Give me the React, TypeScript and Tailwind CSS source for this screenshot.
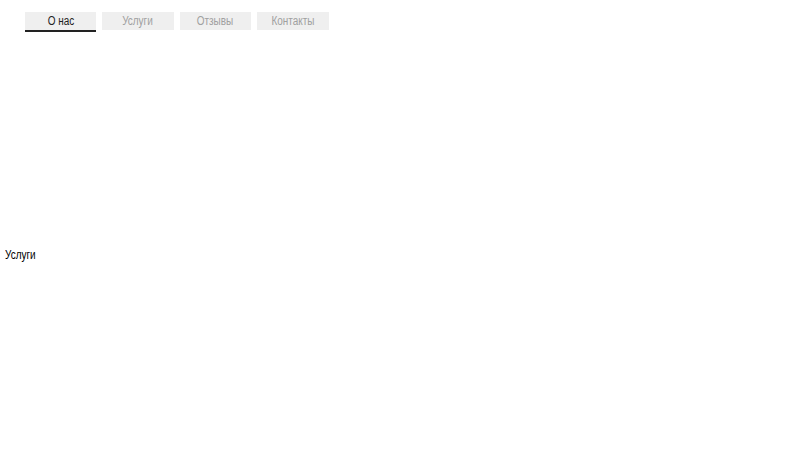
import { useState } from "react";

const TABS = ["О нас", "Услуги", "Отзывы", "Контакты"];

export default function App() {
  const [active, setActive] = useState(0);

  return (
    <div className="min-h-[450px] bg-white font-['Liberation_Sans',Arial,sans-serif] text-[12px]">
      <ul className="flex gap-[6px] pl-[25px] pt-[12px]">
        {TABS.map((tab, i) => (
          <li key={tab}>
            <button
              type="button"
              onClick={() => setActive(i)}
              className={
                i === active
                  ? "flex h-[20px] w-[71px] items-start justify-center border-b-2 border-[#222] bg-[#efefef] pt-[1px] leading-[16px] text-[#222]"
                  : "flex h-[18px] w-[71.5px] items-start justify-center bg-[#efefef] pt-[1px] leading-[16px] text-[#a0a0a0]"
              }
            >
              <span className="inline-block scale-x-[0.83]">{tab}</span>
            </button>
          </li>
        ))}
      </ul>
      <div className="mt-[216px] pl-[5px] leading-[14px] text-black">
        <span className="inline-block origin-left scale-x-[0.83]">Услуги</span>
      </div>
    </div>
  );
}
